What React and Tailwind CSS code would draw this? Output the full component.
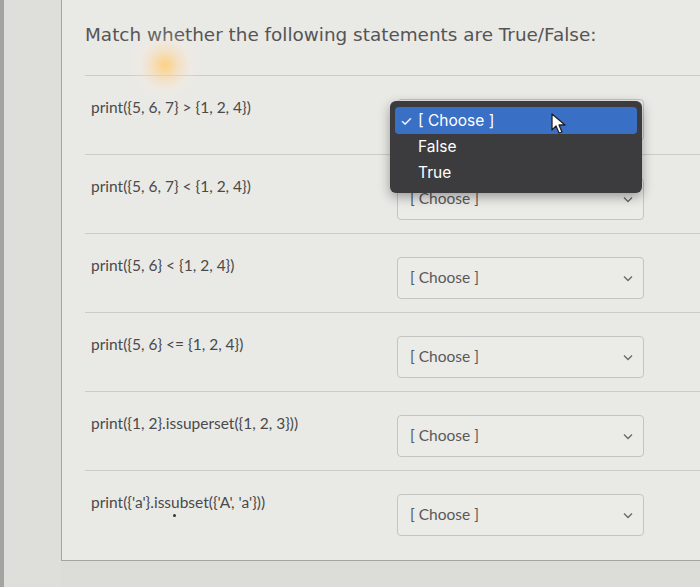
import React from 'react';

const statements = [
  'print({5, 6, 7} > {1, 2, 4})',
  'print({5, 6, 7} < {1, 2, 4})',
  'print({5, 6} < {1, 2, 4})',
  'print({5, 6} <= {1, 2, 4})',
  'print({1, 2}.issuperset({1, 2, 3}))',
  "print({'a'}.issubset({'A', 'a'}))",
];

const Chevron = () => (
  <svg width="10" height="7" viewBox="0 0 10 7" fill="none" stroke="#6b6b6b" strokeWidth="1.4">
    <path d="M1 1.5 L5 5.5 L9 1.5" />
  </svg>
);

// the first select is covered by its own open list, so its label stays hidden
const SelectBox = ({ covered }) => (
  <div className="w-[247px] h-[42px] flex items-center justify-between pl-[12px] pr-[10px] border border-[#c4c4c1] rounded-[4px] bg-[#ebebe8]">
    <span className={`text-[15.5px] text-[#595959] font-['Lato',sans-serif] ${covered ? 'invisible' : ''}`}>[ Choose ]</span>
    <Chevron />
  </div>
);

const Cursor = () => (
  <svg width="16" height="22" viewBox="0 0 16 22">
    <path d="M1 1 L1 17 L5 13 L8 20 L11 19 L8 12 L14 12 Z" fill="#fff" stroke="#222" strokeWidth="1.3" strokeLinejoin="round" />
  </svg>
);

export default function App() {
  return (
    <div className="relative w-[700px] h-[587px] overflow-hidden flex bg-[#d9d9d6] font-['Lato',sans-serif]">
      {/* bezel + margin */}
      <div className="w-[4px] h-full bg-[#a3a3a1]" />
      <div className="w-[57px] h-full bg-[#dededb]" />

      {/* Question card */}
      <div className="flex-1 flex flex-col">
        <div className="h-[561px] border-l border-b border-[#a4a4a1] bg-[#e9e9e6] pl-[23px] flex flex-col">
          <h1 className="h-[75px] pt-[22px] text-[18.4px] leading-[26px] text-[#555] font-['DejaVu_Sans',sans-serif]">
            Match whether the following statements are True/False:
          </h1>

          {statements.map((s, i) => (
            <div
              key={i}
              className={`flex items-start border-t border-[#cbcbc8] ${i === statements.length - 1 ? 'flex-1' : 'h-[79px]'}`}
            >
              <div className="w-[312px] pl-[6px] pt-[21px] text-[15.5px] leading-[20px] text-[#4a4a4a]">{s}</div>
              <div className="pt-[23px]">
                <SelectBox covered={i === 0} />
              </div>
            </div>
          ))}
        </div>
        <div className="flex-1 bg-[#dcdcd9]" />
      </div>

      {/* glare from the photo */}
      <div className="pointer-events-none absolute left-[125px] top-[25px] w-[80px] h-[80px] rounded-full bg-[radial-gradient(circle,rgba(255,206,120,0.9)_0%,rgba(255,215,160,0.45)_25%,rgba(255,240,220,0.2)_45%,transparent_68%)]" />

      {/* stray speck */}
      <div className="absolute left-[173px] top-[514px] w-[3px] h-[3px] rounded-full bg-[#333]" />

      {/* open dropdown list */}
      <div className="absolute left-[390px] top-[101px] w-[252px] h-[92px] rounded-[6px] bg-[#3c3c3e] shadow-[0_4px_12px_rgba(0,0,0,0.35)] px-[5px] pt-[6px] font-['Inter',sans-serif] text-[15.5px] text-white">
        <div className="h-[27px] rounded-[4px] bg-[#3a6fc6] flex items-center pl-[5px]">
          <span className="w-[18px] text-[14px]">✓</span>
          <span>[ Choose ]</span>
        </div>
        <div className="h-[26px] flex items-center pl-[23px]">False</div>
        <div className="h-[26px] flex items-center pl-[23px]">True</div>
      </div>

      <div className="absolute left-[551px] top-[113px]">
        <Cursor />
      </div>
    </div>
  );
}
